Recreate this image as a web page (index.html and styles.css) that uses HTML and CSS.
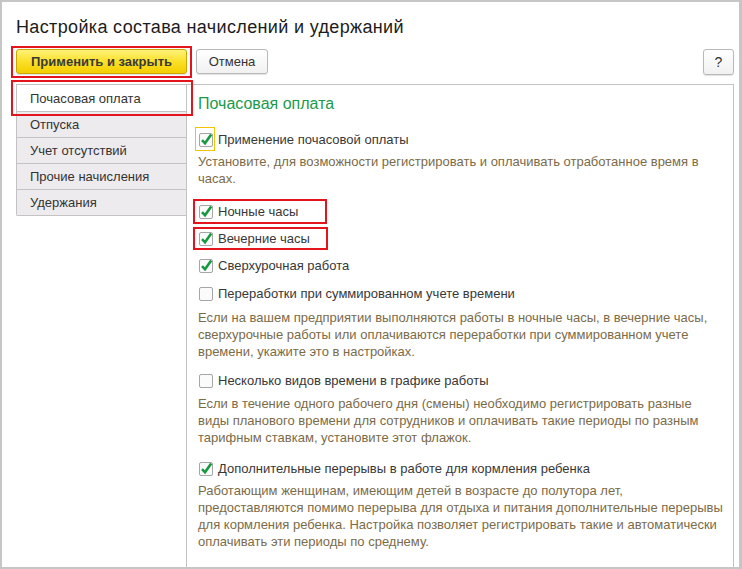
FILE: index.html
```html
<!DOCTYPE html>
<html lang="ru">
<head>
<meta charset="utf-8">
<title>Настройка состава начислений и удержаний</title>
<link rel="stylesheet" href="styles.css">
</head>
<body>
<div class="window">
  <h1 class="title">Настройка состава начислений и удержаний</h1>
  <div class="toolbar">
    <button class="btn btn-primary marked">Применить и закрыть</button>
    <button class="btn btn-cancel">Отмена</button>
    <button class="btn btn-help">?</button>
  </div>
  <div class="body">
    <nav class="tabs">
      <div class="tab active marked-tab">Почасовая оплата</div>
      <div class="tab">Отпуска</div>
      <div class="tab">Учет отсутствий</div>
      <div class="tab">Прочие начисления</div>
      <div class="tab last">Удержания</div>
    </nav>
    <section class="panel">
      <h2 class="panel-title">Почасовая оплата</h2>

      <div class="check first">
        <span class="cb focus"><svg viewBox="0 0 14 15" width="14" height="15"><rect x="0.5" y="1.5" width="13" height="13" rx="1.5" class="cb-box"/><path d="M3 8.2 L6 11.3 L12.2 2.6" class="cb-tick"/></svg></span>
        <span>Применение почасовой оплаты</span>
      </div>
      <p class="desc d-first">Установите, для возможности регистрировать и оплачивать отработанное время в<br>часах.</p>

      <div class="check after-desc-first hl hl-1">
        <span class="cb"><svg viewBox="0 0 14 15" width="14" height="15"><rect x="0.5" y="1.5" width="13" height="13" rx="1.5" class="cb-box"/><path d="M3 8.2 L6 11.3 L12.2 2.6" class="cb-tick"/></svg></span>
        <span>Ночные часы</span>
      </div>
      <div class="check hl hl-2">
        <span class="cb"><svg viewBox="0 0 14 15" width="14" height="15"><rect x="0.5" y="1.5" width="13" height="13" rx="1.5" class="cb-box"/><path d="M3 8.2 L6 11.3 L12.2 2.6" class="cb-tick"/></svg></span>
        <span>Вечерние часы</span>
      </div>
      <div class="check">
        <span class="cb"><svg viewBox="0 0 14 15" width="14" height="15"><rect x="0.5" y="1.5" width="13" height="13" rx="1.5" class="cb-box"/><path d="M3 8.2 L6 11.3 L12.2 2.6" class="cb-tick"/></svg></span>
        <span>Сверхурочная работа</span>
      </div>
      <div class="check spaced">
        <span class="cb"><svg viewBox="0 0 14 15" width="14" height="15"><rect x="0.5" y="1.5" width="13" height="13" rx="1.5" class="cb-box"/></svg></span>
        <span>Переработки при суммированном учете времени</span>
      </div>
      <p class="desc spaced">Если на вашем предприятии выполняются работы в ночные часы, в вечерние часы,<br>сверхурочные работы или оплачиваются переработки при суммированном учете<br>времени, укажите это в настройках.</p>

      <div class="check after-desc tight">
        <span class="cb"><svg viewBox="0 0 14 15" width="14" height="15"><rect x="0.5" y="1.5" width="13" height="13" rx="1.5" class="cb-box"/></svg></span>
        <span>Несколько видов времени в графике работы</span>
      </div>
      <p class="desc">Если в течение одного рабочего дня (смены) необходимо регистрировать разные<br>виды планового времени для сотрудников и оплачивать такие периоды по разным<br>тарифным ставкам, установите этот флажок.</p>

      <div class="check after-desc">
        <span class="cb"><svg viewBox="0 0 14 15" width="14" height="15"><rect x="0.5" y="1.5" width="13" height="13" rx="1.5" class="cb-box"/><path d="M3 8.2 L6 11.3 L12.2 2.6" class="cb-tick"/></svg></span>
        <span>Дополнительные перерывы в работе для кормления ребенка</span>
      </div>
      <p class="desc d-last">Работающим женщинам, имеющим детей в возрасте до полутора лет,<br>предоставляются помимо перерыва для отдыха и питания дополнительные перерывы<br>для кормления ребенка. Настройка позволяет регистрировать такие и автоматически<br>оплачивать эти периоды по среднему.</p>
    </section>
  </div>
</div>
</body>
</html>
```

FILE: styles.css
```css
html, body {
  margin: 0;
  padding: 0;
  background: #ffffff;
}

body {
  font-family: "Liberation Sans", Arial, sans-serif;
  font-size: 13px;
  color: #333333;
}

.window {
  width: 742px;
  height: 569px;
  box-sizing: border-box;
  border: 2px solid #c6c6c6;
  border-right-width: 3px;
  background: #ffffff;
  display: flex;
  flex-direction: column;
  overflow: hidden;
}

.title {
  margin: 0;
  padding: 14px 0 0 14px;
  font-size: 18px;
  line-height: 22px;
  letter-spacing: 0.35px;
  font-weight: normal;
  color: #1c1c1c;
}

.toolbar {
  display: flex;
  align-items: flex-start;
  gap: 9px;
  margin-top: 11px;
  padding: 0 5px 0 14px;
  height: 26px;
}

.btn {
  position: relative;
  box-sizing: border-box;
  height: 25px;
  padding: 0;
  font-family: "Liberation Sans", Arial, sans-serif;
  font-size: 13px;
  color: #333333;
  background: linear-gradient(#ffffff, #f1f1f1);
  border: 1px solid #b9b9b9;
  border-radius: 3px;
  box-shadow: 0 1px 1px rgba(0, 0, 0, 0.12);
}

.btn-primary {
  width: 171px;
  font-weight: bold;
  color: #3a3a3a;
  background: linear-gradient(#fff27a, #fbe02a 50%, #f3cf00);
  border-color: #c9a700;
}

.btn-cancel {
  width: 72px;
}

.btn-help {
  width: 31px;
  height: 26px;
  margin-left: auto;
  font-size: 14px;
}

.marked::after {
  content: "";
  position: absolute;
  left: -6px;
  top: -4px;
  width: 181px;
  height: 32px;
  box-sizing: border-box;
  border: 2px solid #e3141c;
}

.body {
  flex: 1;
  display: flex;
  margin-top: 9px;
  padding: 0 5px 0 14px;
  min-height: 0;
}

.tabs {
  width: 170px;
  flex: none;
  display: flex;
  flex-direction: column;
}

.tab {
  position: relative;
  box-sizing: border-box;
  height: 26px;
  padding-left: 13px;
  display: flex;
  align-items: center;
  background: #eeebee;
  border-top: 1px solid #c3c3c3;
  border-left: 1px solid #c3c3c3;
  color: #333333;
  line-height: 17px;
}

.tab.active {
  height: 27px;
  background: #ffffff;
  border-top-color: #c3c3c3;
}

.tab.last {
  height: 27px;
  border-bottom: 1px solid #c3c3c3;
  border-bottom-left-radius: 2px;
}

.marked-tab::after {
  content: "";
  position: absolute;
  left: -6px;
  top: -5px;
  width: 182px;
  height: 36px;
  box-sizing: border-box;
  border: 2px solid #e3141c;
  z-index: 2;
}

.panel {
  flex: 1;
  border-top: 1px solid #c3c3c3;
  border-left: 1px solid #c3c3c3;
  border-right: 1px solid #c3c3c3;
  padding-left: 11px;
}

.panel-title {
  margin: 10px 0 0;
  font-size: 16px;
  line-height: 18px;
  font-weight: normal;
  color: #1b9a4b;
}

.check {
  position: relative;
  display: flex;
  align-items: center;
  height: 24px;
  margin-top: 3px;
  line-height: 17px;
  color: #383838;
  white-space: nowrap;
}

.check.first {
  margin-top: 14px;
}

.check.after-desc-first {
  margin-top: 12px;
}

.check.spaced {
  margin-top: 4px;
}

.check.after-desc {
  margin-top: 10px;
}

.check.after-desc.tight {
  margin-top: 8px;
}

.cb {
  position: relative;
  display: block;
  width: 14px;
  height: 15px;
  margin: 0 5px 0 1px;
}

.cb svg {
  display: block;
}

.cb-box {
  fill: #fbfbfb;
  stroke: #a6a6a6;
  stroke-width: 1;
}

.cb-tick {
  fill: none;
  stroke: #16993f;
  stroke-width: 2.6;
  stroke-linecap: butt;
  stroke-linejoin: miter;
}

.cb.focus::after {
  content: "";
  position: absolute;
  left: -4px;
  top: -5px;
  width: 20px;
  height: 24px;
  box-sizing: border-box;
  border: 1px solid #f4c400;
}

.hl::after {
  content: "";
  position: absolute;
  left: -5px;
  box-sizing: border-box;
  border: 2px solid #e3141c;
}

.hl-1::after {
  top: 0;
  width: 134px;
  height: 25px;
}

.hl-2::after {
  top: 1px;
  width: 135px;
  height: 23px;
}

.desc {
  margin: 3px 0 0;
  line-height: 17px;
  color: #7b6b49;
  white-space: nowrap;
}

.desc.d-first {
  margin-top: 2px;
}

.desc.spaced {
  margin-top: 4px;
}

.desc.d-last {
  margin-top: 2px;
}
```
